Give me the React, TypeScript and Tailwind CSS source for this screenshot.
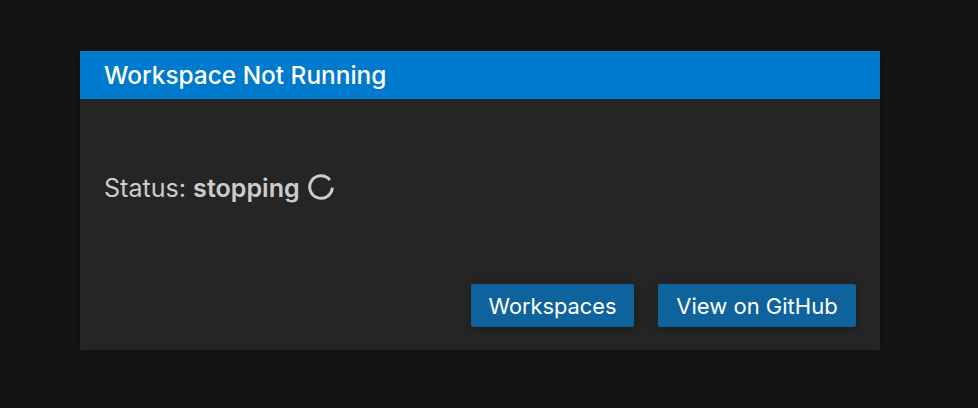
export default function App() {
  return (
    <div className="w-[978px] h-[408px] bg-[#141414] pt-[51px] pl-[80px] overflow-hidden font-['Inter','Liberation_Sans',sans-serif]">
      <div className="w-[800px] h-[299px] bg-[#252526] flex flex-col shadow-[0_0_8px_rgba(0,0,0,0.36)]">
        <div className="h-[48px] shrink-0 bg-[#007acc] flex items-center px-6 text-[24.4px] text-white font-medium">
          Workspace Not Running
        </div>
        <div className="flex-1 flex flex-col px-6 pb-[23px]">
          <div className="mt-[21px] pt-[48px] flex items-center gap-2 text-[25.1px] leading-[40px] text-[#cccccc]">
            <span>
              Status: <strong className="font-semibold">stopping</strong>
            </span>
            <svg width="26" height="26" viewBox="0 0 26 26" fill="none" className="mb-[2px]">
              <path
                d="M21.9 6 A 11.3 11.3 0 1 0 24.3 13.6"
                stroke="#cccccc"
                strokeWidth="3"
              />
            </svg>
          </div>
          <div className="mt-auto flex justify-end gap-6">
            <button className="h-[43px] w-[163px] rounded-[2px] bg-[#0e639c] text-white text-[21.8px] leading-[45px] shadow-[0_2px_8px_rgba(0,0,0,0.25)]">
              Workspaces
            </button>
            <button className="h-[43px] w-[198px] rounded-[2px] bg-[#0e639c] text-white text-[22px] leading-[45px] shadow-[0_2px_8px_rgba(0,0,0,0.25)]">
              View on GitHub
            </button>
          </div>
        </div>
      </div>
    </div>
  );
}
